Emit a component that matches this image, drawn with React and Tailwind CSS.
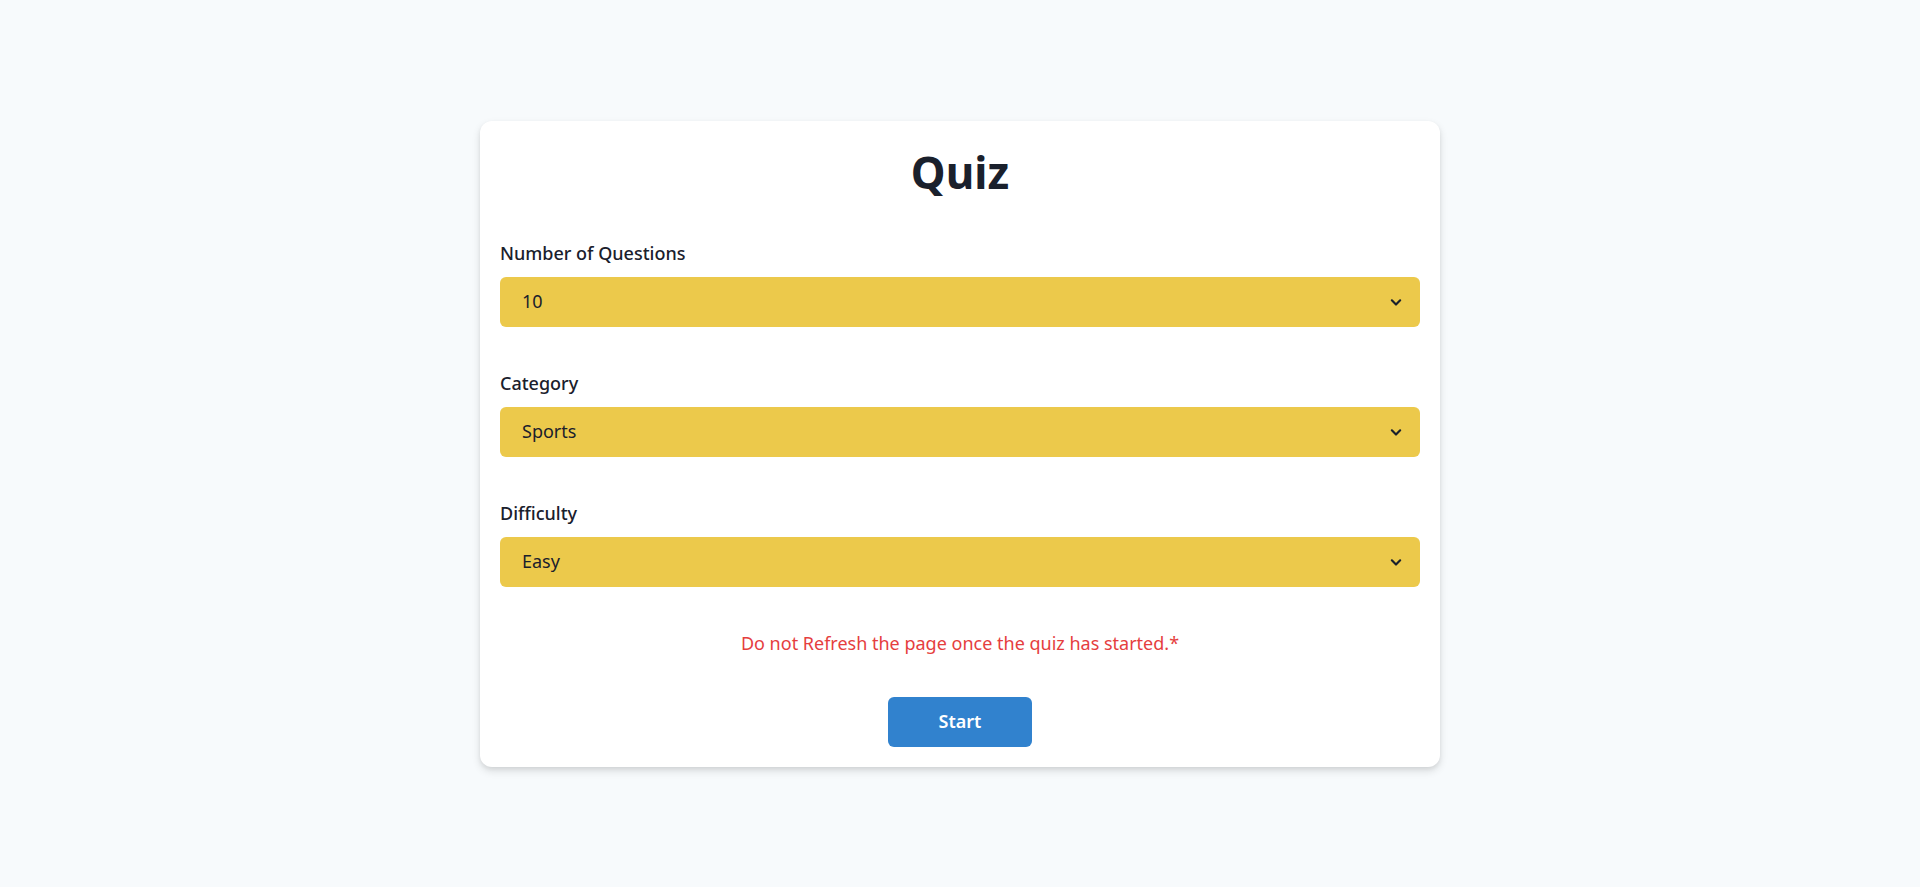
import { useState } from "react";

const fields = [
  { id: "amount", label: "Number of Questions", options: ["5", "10", "15", "20"], initial: "10" },
  { id: "category", label: "Category", options: ["General Knowledge", "Sports", "History", "Science"], initial: "Sports" },
  { id: "difficulty", label: "Difficulty", options: ["Easy", "Medium", "Hard"], initial: "Easy" },
];

function Chevron() {
  return (
    <svg
      viewBox="0 0 24 24"
      className="pointer-events-none absolute right-[14px] top-1/2 h-[20px] w-[20px] -translate-y-1/2 text-[#1a202c]"
      fill="none"
      stroke="currentColor"
      strokeWidth="2.6"
      strokeLinecap="round"
      strokeLinejoin="round"
    >
      <polyline points="7 10 12 15 17 10" />
    </svg>
  );
}

export default function App() {
  const [values, setValues] = useState(
    Object.fromEntries(fields.map((f) => [f.id, f.initial]))
  );

  return (
    <div className="flex min-h-screen items-center justify-center bg-[#f7fafc] font-['Noto_Sans',sans-serif] text-[#1a202c]">
      <div className="flex w-[960px] flex-col rounded-xl bg-white p-5 shadow-[0_4px_8px_rgba(0,0,0,0.12),0_2px_4px_rgba(0,0,0,0.06)]">
        <h1 className="mt-[6px] text-center text-[44px] leading-[50px] font-bold">Quiz</h1>

        {fields.map((f) => (
          <div key={f.id} className="mt-[43px] flex flex-col">
            <label htmlFor={f.id} className="mb-[10px] text-[18px] leading-[27px] font-medium">
              {f.label}
            </label>
            <div className="relative">
              <select
                id={f.id}
                value={values[f.id]}
                onChange={(e) => setValues({ ...values, [f.id]: e.target.value })}
                className="h-[50px] w-full appearance-none rounded-md bg-[#ecc94b] pl-[22px] pr-10 text-[18px] text-[#1a202c] outline-none"
              >
                {f.options.map((o) => (
                  <option key={o} value={o}>
                    {o}
                  </option>
                ))}
              </select>
              <Chevron />
            </div>
          </div>
        ))}

        <p className="mt-[43px] text-center text-[18px] leading-[27px] text-[#e53e3e]">
          Do not Refresh the page once the quiz has started.*
        </p>

        <div className="mt-[40px] flex justify-center">
          <button className="h-[50px] w-[144px] rounded-md bg-[#3182ce] text-[18px] font-semibold text-white">
            Start
          </button>
        </div>
      </div>
    </div>
  );
}
